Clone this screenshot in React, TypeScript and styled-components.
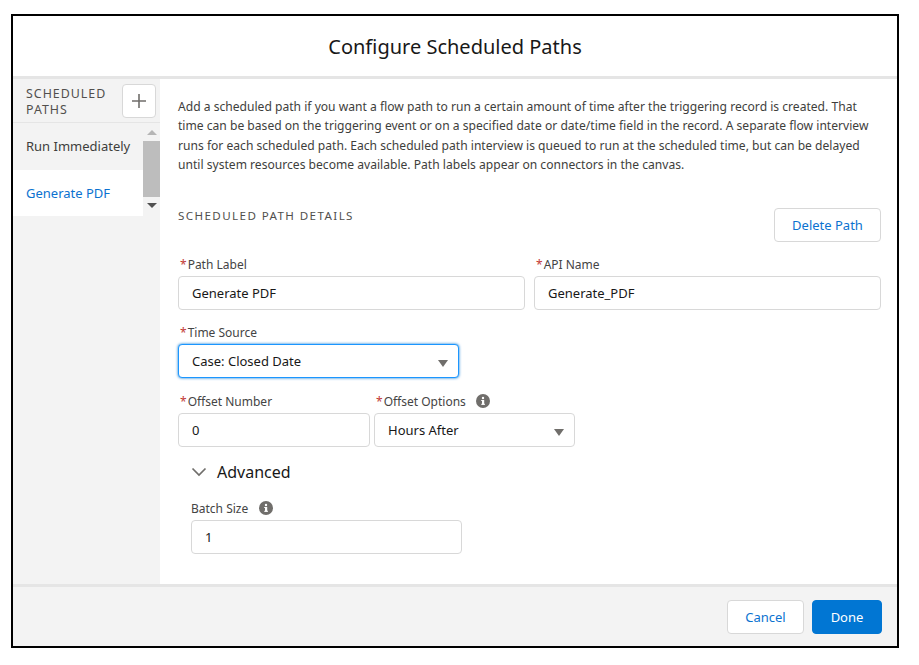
import React, { FC } from 'react'
import styled, { createGlobalStyle } from 'styled-components'

const GlobalStyle = createGlobalStyle`
	html, body {
		margin: 0;
		padding: 0;
		background: #fff;
		font-family: 'Noto Sans', 'Open Sans', sans-serif;
		color: #3e3e3c;
	}
	* {
		box-sizing: border-box;
	}
`

const InfoIcon: FC = () => (
	<StyledInfo viewBox="0 0 14 14" aria-hidden="true">
		<circle cx="7" cy="7" r="7" fill="#706e6b" />
		<rect x="6" y="6" width="2.2" height="4.6" fill="#fff" />
		<rect x="5.2" y="6" width="1.6" height="1" fill="#fff" />
		<rect x="5.2" y="9.8" width="3.8" height="1" fill="#fff" />
		<circle cx="7" cy="4" r="1.2" fill="#fff" />
	</StyledInfo>
)

interface FieldProps {
	label: string
	required?: boolean
	info?: boolean
	value: string
	width: number
	select?: boolean
	focused?: boolean
}

const Field: FC<FieldProps> = ({ label, required, info, value, width, select, focused }) => (
	<StyledField $width={width}>
		<StyledLabel $indent={required}>
			{required && <StyledStar>*</StyledStar>}
			{label}
			{info && <InfoIcon />}
		</StyledLabel>
		<StyledControl $focused={focused}>
			{value}
			{select && <StyledCaret />}
		</StyledControl>
	</StyledField>
)

const App: FC = () => (
	<>
		<GlobalStyle />
		<StyledFrame>
			<StyledHeader>Configure Scheduled Paths</StyledHeader>
			<StyledBody>
				<StyledSidebar>
					<StyledSidebarHead>
						<StyledSidebarTitle>Scheduled Paths</StyledSidebarTitle>
						<StyledAddButton aria-label="Add">
							<svg width="14" height="14" viewBox="0 0 14 14" aria-hidden="true">
								<path d="M7 0v14M0 7h14" stroke="#706e6b" strokeWidth="1.6" fill="none" />
							</svg>
						</StyledAddButton>
					</StyledSidebarHead>
					<StyledListWrap>
						<StyledList>
							<StyledItem>Run Immediately</StyledItem>
							<StyledItem $active>Generate PDF</StyledItem>
						</StyledList>
						<StyledScrollbar>
							<StyledArrowUp />
							<StyledThumb />
							<StyledArrowDown />
						</StyledScrollbar>
					</StyledListWrap>
				</StyledSidebar>
				<StyledMain>
					<StyledIntro>
						Add a scheduled path if you want a flow path to run a certain amount of time after the triggering record is
						created. That time can be based on the triggering event or on a specified date or date/time field in the
						record. A separate flow interview runs for each scheduled path. Each scheduled path interview is queued to
						run at the scheduled time, but can be delayed until system resources become available. Path labels appear on
						connectors in the canvas.
					</StyledIntro>
					<StyledSectionRow>
						<StyledSectionTitle>Scheduled Path Details</StyledSectionTitle>
						<StyledButton $width={107}>Delete Path</StyledButton>
					</StyledSectionRow>
					<StyledRow $gap={9}>
						<Field label="Path Label" required value="Generate PDF" width={347} />
						<Field label="API Name" required value="Generate_PDF" width={347} />
					</StyledRow>
					<StyledRow $gap={0}>
						<Field label="Time Source" required value="Case: Closed Date" width={281} select focused />
					</StyledRow>
					<StyledRow $gap={4}>
						<Field label="Offset Number" required value="0" width={192} />
						<Field label="Offset Options" required info value="Hours After" width={201} select />
					</StyledRow>
					<StyledAdvanced>
						<svg width="16" height="10" viewBox="0 0 16 10" aria-hidden="true">
							<path d="M1.5 1.5 8 8l6.5-6.5" stroke="#706e6b" strokeWidth="1.7" fill="none" />
						</svg>
						Advanced
					</StyledAdvanced>
					<StyledBatchRow>
						<Field label="Batch Size" info value="1" width={271} />
					</StyledBatchRow>
				</StyledMain>
			</StyledBody>
			<StyledFooter>
				<StyledButton $width={77}>Cancel</StyledButton>
				<StyledPrimaryButton $width={70}>Done</StyledPrimaryButton>
			</StyledFooter>
		</StyledFrame>
	</>
)

export default App

const StyledFrame = styled.div`
	width: 888px;
	height: 634px;
	margin: 14px 0 0 11px;
	border: 2px solid #000;
	display: flex;
	flex-direction: column;
	background: #fff;
`

const StyledHeader = styled.div`
	height: 63px;
	flex: none;
	border-bottom: 3px solid #e5e5e5;
	display: flex;
	align-items: center;
	justify-content: center;
	font-size: 20px;
	color: #181818;
`

const StyledBody = styled.div`
	flex: 1;
	display: flex;
	min-height: 0;
`

const StyledSidebar = styled.div`
	width: 147px;
	flex: none;
	background: #f3f3f3;
`

const StyledSidebarHead = styled.div`
	height: 44px;
	padding: 5px 4px 0 13px;
	border-bottom: 1px solid #e5e5e5;
	display: flex;
	justify-content: space-between;
	align-items: flex-start;
`

const StyledSidebarTitle = styled.div`
	width: 90px;
	margin-top: 2px;
	font-size: 12.4px;
	line-height: 16px;
	letter-spacing: 1px;
	text-transform: uppercase;
	color: #514f4d;
`

const StyledAddButton = styled.button`
	width: 34px;
	height: 34px;
	padding: 0;
	border: 1px solid #d8d8d8;
	border-radius: 4px;
	background: #fff;
	display: flex;
	align-items: center;
	justify-content: center;
`

const StyledListWrap = styled.div`
	display: flex;
	height: 93px;
`

const StyledList = styled.div`
	width: 130px;
	flex: none;
`

const StyledItem = styled.div<{ $active?: boolean }>`
	height: 46.5px;
	padding-left: 13px;
	display: flex;
	align-items: center;
	font-size: 13px;
	white-space: nowrap;
	background: ${({ $active }) => ($active ? '#fff' : '#f3f3f3')};
	color: ${({ $active }) => ($active ? '#0b72d0' : '#3e3e3c')};
`

const StyledScrollbar = styled.div`
	width: 17px;
	display: flex;
	flex-direction: column;
	align-items: center;
`

const StyledArrowUp = styled.div`
	margin: 7px 0 6px;
	border-left: 5px solid transparent;
	border-right: 5px solid transparent;
	border-bottom: 5px solid #b5b5b5;
`

const StyledThumb = styled.div`
	width: 100%;
	height: 56px;
	background: #bdbdbd;
`

const StyledArrowDown = styled.div`
	margin-top: 6px;
	border-left: 5px solid transparent;
	border-right: 5px solid transparent;
	border-top: 5px solid #505050;
`

const StyledMain = styled.div`
	flex: 1;
	padding: 18px 16px 0 18px;
	min-width: 0;
`

const StyledIntro = styled.p`
	margin: 0;
	font-size: 12.1px;
	line-height: 19.3px;
	color: #3e3e3c;
`

const StyledSectionRow = styled.div`
	margin-top: 33.8px;
	display: flex;
	justify-content: space-between;
	align-items: flex-start;
`

const StyledSectionTitle = styled.div`
	font-size: 11.6px;
	line-height: 16px;
	letter-spacing: 1.4px;
	text-transform: uppercase;
	color: #514f4d;
`

const StyledButton = styled.button<{ $width: number }>`
	width: ${({ $width }) => $width}px;
	height: 34px;
	padding: 0;
	border: 1px solid #d8d8d8;
	border-radius: 4px;
	background: #fff;
	font-family: inherit;
	font-size: 13px;
	color: #0b72d0;
`

const StyledPrimaryButton = styled(StyledButton)`
	border-color: #0176d3;
	background: #0176d3;
	color: #fff;
`

const StyledRow = styled.div<{ $gap: number }>`
	display: flex;
	gap: ${({ $gap }) => $gap}px;
	margin-top: 13.2px;
`

const StyledField = styled.div<{ $width: number }>`
	width: ${({ $width }) => $width}px;
	flex: none;
`

const StyledLabel = styled.div<{ $indent?: boolean }>`
	height: 21px;
	padding-left: ${({ $indent }) => ($indent ? '2px' : '0')};
	padding-bottom: 2px;
	display: flex;
	align-items: center;
	font-size: 12px;
	color: #444;
`

const StyledStar = styled.span`
	margin-right: 1px;
	color: #c23934;
`

const StyledInfo = styled.svg`
	width: 14px;
	height: 14px;
	margin-left: 10.5px;
`

const StyledControl = styled.div<{ $focused?: boolean }>`
	position: relative;
	height: 34px;
	padding-left: 13px;
	display: flex;
	align-items: center;
	font-size: 13px;
	color: #181818;
	background: #fff;
	border-radius: 4px;
	border: 1px solid ${({ $focused }) => ($focused ? '#1b96ff' : '#d8d8d8')};
	box-shadow: ${({ $focused }) => ($focused ? '0 0 3px #0176d3' : 'none')};
`

const StyledCaret = styled.span`
	position: absolute;
	right: 10px;
	top: 15px;
	border-left: 5.5px solid transparent;
	border-right: 5.5px solid transparent;
	border-top: 7px solid #706e6b;
`

const StyledAdvanced = styled.div`
	margin: 13px 0 0 13px;
	height: 24px;
	display: flex;
	align-items: center;
	gap: 10px;
	font-size: 16px;
	color: #181818;
`

const StyledBatchRow = styled.div`
	margin: 15px 0 0 13px;
`

const StyledFooter = styled.div`
	height: 62px;
	flex: none;
	border-top: 3px solid #e5e5e5;
	background: #f3f3f3;
	padding-right: 15px;
	display: flex;
	align-items: center;
	justify-content: flex-end;
	gap: 8px;
`
